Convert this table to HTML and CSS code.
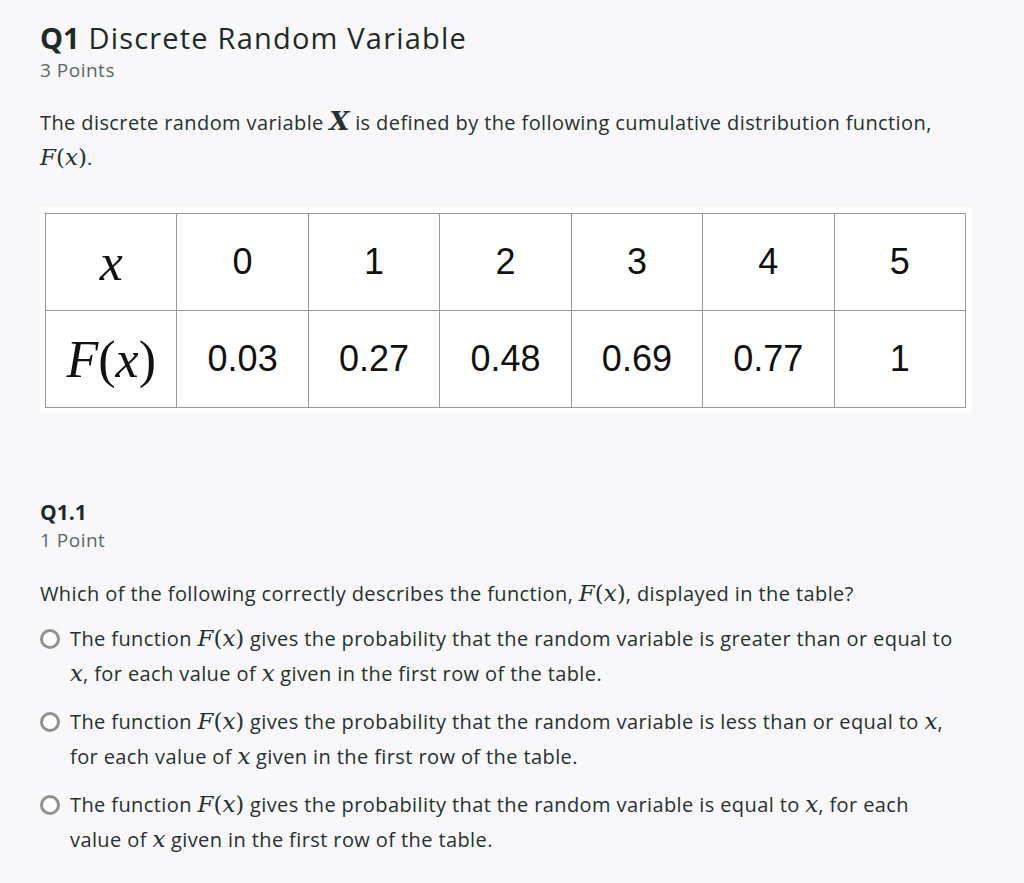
FILE: index.html
```html
<!DOCTYPE html>
<html>
<head>
<meta charset="utf-8">
<link rel="stylesheet" href="styles.css">
</head>
<body>
<div class="page">
  <section class="question">
    <h1 class="q-title"><b>Q1</b> Discrete Random Variable</h1>
    <div class="q-points">3 Points</div>
    <p class="q-text">The discrete random variable <span class="math big">X</span> is defined by the following cumulative distribution function, <span class="math"><i>F</i>(<i>x</i>)</span>.</p>
    <div class="figure">
      <table class="cdf">
        <tr>
          <td class="lbl"><i>x</i></td><td>0</td><td>1</td><td>2</td><td>3</td><td>4</td><td>5</td>
        </tr>
        <tr>
          <td class="lbl"><i>F</i>(<i>x</i>)</td><td>0.03</td><td>0.27</td><td>0.48</td><td>0.69</td><td>0.77</td><td>1</td>
        </tr>
      </table>
    </div>
  </section>

  <section class="sub">
    <h2 class="sub-title">Q1.1</h2>
    <div class="q-points">1 Point</div>
    <p class="sub-text">Which of the following correctly describes the function, <span class="math"><i>F</i>(<i>x</i>)</span>, displayed in the table?</p>
    <ul class="options">
      <li class="option"><span class="radio"></span><span class="opt-text">The function <span class="math"><i>F</i>(<i>x</i>)</span> gives the probability that the random variable is greater than or equal to <span class="math"><i>x</i></span>, for each value of <span class="math"><i>x</i></span> given in the first row of the table.</span></li>
      <li class="option"><span class="radio"></span><span class="opt-text">The function <span class="math"><i>F</i>(<i>x</i>)</span> gives the probability that the random variable is less than or equal to <span class="math"><i>x</i></span>, for each value of <span class="math"><i>x</i></span> given in the first row of the table.</span></li>
      <li class="option"><span class="radio"></span><span class="opt-text">The function <span class="math"><i>F</i>(<i>x</i>)</span> gives the probability that the random variable is equal to <span class="math"><i>x</i></span>, for each value of <span class="math"><i>x</i></span> given in the first row of the table.</span></li>
    </ul>
  </section>
</div>
</body>
</html>
```

FILE: styles.css
```css
html, body {
  margin: 0;
  padding: 0;
  background: #f8f8fa;
}
body {
  font-family: "Open Sans", "Noto Sans", sans-serif;
  color: #27302f;
}
.page {
  padding: 20px 40px 0 40px;
}
.q-title {
  margin: 0;
  font-size: 29px;
  font-weight: 400;
  letter-spacing: 1.2px;
  line-height: 36px;
  color: #1f2a28;
}
.q-title b {
  font-weight: 700;
  letter-spacing: 0;
}
.q-points {
  font-size: 19px;
  letter-spacing: 0.5px;
  line-height: 28px;
  color: #5b6766;
}
.q-text {
  margin: 21px 0 0 0;
  font-size: 20px;
  letter-spacing: 0.4px;
  line-height: 35px;
  width: 900px;
}
.math {
  font-family: "DejaVu Serif", "Liberation Serif", serif;
  font-size: 23px;
  letter-spacing: 0;
  line-height: 1;
}
.math i {
  font-style: italic;
}
.math.big {
  font-size: 26px;
  font-style: italic;
  font-weight: 700;
}
.figure {
  margin-top: 32px;
  width: 932px;
  height: 206px;
  background: #ffffff;
  padding: 6px 0 0 5px;
  box-sizing: border-box;
}
.cdf {
  border-collapse: collapse;
  width: 921px;
  table-layout: fixed;
}
.cdf td {
  border: 1px solid #999;
  height: 96px;
  text-align: center;
  font-family: "Liberation Sans", Arial, sans-serif;
  font-size: 36px;
  color: #111;
  padding: 0;
}
.cdf td + td {
  border-left-color: #555;
}
.cdf td.lbl {
  font-family: "Liberation Serif", serif;
  font-size: 52px;
  color: #111;
}
.sub {
  margin-top: 85px;
}
.sub-title {
  margin: 0;
  font-size: 21px;
  font-weight: 700;
  line-height: 28px;
  color: #1f2a28;
}
.sub-text {
  margin: 22px 0 0 0;
  font-size: 20px;
  letter-spacing: 0.4px;
  line-height: 35px;
}
.options {
  list-style: none;
  margin: 10px 0 0 0;
  padding: 0;
}
.option {
  display: flex;
  align-items: flex-start;
  gap: 10px;
  font-size: 20px;
  letter-spacing: 0.4px;
  line-height: 35px;
  margin-bottom: 13px;
}
.radio {
  flex: none;
  width: 20px;
  height: 20px;
  margin-top: 8px;
  border: 3px solid #8c9291;
  border-radius: 50%;
  box-sizing: border-box;
  background: #fff;
}
.opt-text {
  width: 884px;
}
```
